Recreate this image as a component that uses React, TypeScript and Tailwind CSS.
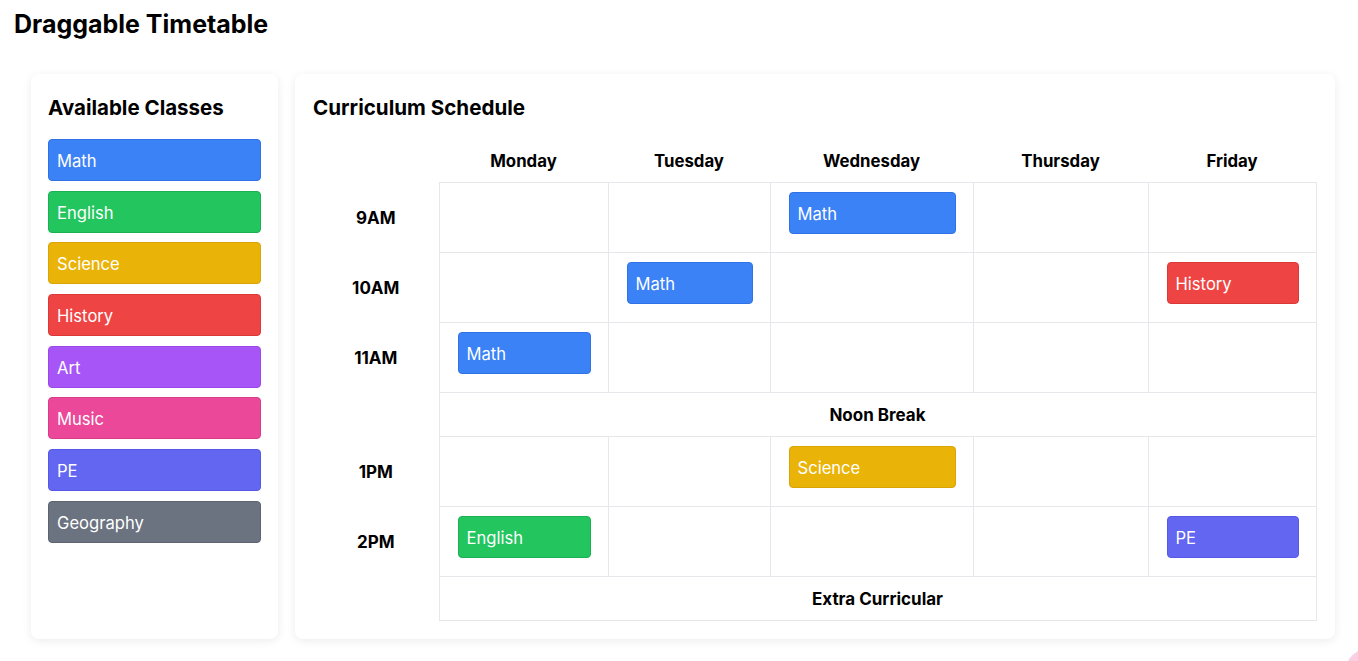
import React from 'react';

type Subject = { name: string; bg: string };

const classes: Subject[] = [
    { name: 'Math', bg: 'bg-[#3b82f6] border-[#2f72e6]' },
    { name: 'English', bg: 'bg-[#22c55e] border-[#1bb152]' },
    { name: 'Science', bg: 'bg-[#eab308] border-[#d9a506]' },
    { name: 'History', bg: 'bg-[#ef4444] border-[#dc3838]' },
    { name: 'Art', bg: 'bg-[#a855f7] border-[#9a48ea]' },
    { name: 'Music', bg: 'bg-[#ec4899] border-[#da3c8b]' },
    { name: 'PE', bg: 'bg-[#6366f1] border-[#5558e6]' },
    { name: 'Geography', bg: 'bg-[#6b7280] border-[#5d6470]' },
];

const colorOf = (name: string) => classes.find(c => c.name === name)?.bg ?? '';

const days = [
    { name: 'Monday', w: 'w-[169px]' },
    { name: 'Tuesday', w: 'w-[162px]' },
    { name: 'Wednesday', w: 'w-[203px]' },
    { name: 'Thursday', w: 'w-[175px]' },
    { name: 'Friday', w: 'w-[168px]' },
];

type Row = { time: string; cells: (string | null)[] } | { label: string };

const rows: Row[] = [
    { time: '9AM', cells: [null, null, 'Math', null, null] },
    { time: '10AM', cells: [null, 'Math', null, null, 'History'] },
    { time: '11AM', cells: ['Math', null, null, null, null] },
    { label: 'Noon Break' },
    { time: '1PM', cells: [null, null, 'Science', null, null] },
    { time: '2PM', cells: ['English', null, null, null, 'PE'] },
    { label: 'Extra Curricular' },
];

function Chip({ name }: { name: string }) {
    return (
        <div className={`h-[42px] flex items-center px-2 pt-[3px] rounded-[4px] border text-white text-[16.6px] ${colorOf(name)}`}>
            {name}
        </div>
    );
}

export default function App() {
    return (
        <div className="relative min-h-[661px] bg-white text-black overflow-hidden font-['Inter','Liberation_Sans',sans-serif]">
            <h1 className="pl-[14px] pt-[8px] text-[25px] leading-[32px] font-bold">Draggable Timetable</h1>

            <div className="flex gap-[17px] pl-[31px] pr-[24px] mt-[34px]">
                {/* Available classes */}
                <div className="w-[247px] shrink-0 bg-white rounded-lg shadow-[0_2px_10px_rgba(0,0,0,0.08)] p-[17px] pt-[20px]">
                    <h2 className="text-[20.5px] leading-[28px] font-bold mb-[17px]">Available Classes</h2>
                    <div className="flex flex-col gap-[9.7px]">
                        {classes.map(c => (
                            <Chip key={c.name} name={c.name} />
                        ))}
                    </div>
                </div>

                {/* Schedule */}
                <div className="flex-1 bg-white rounded-lg shadow-[0_2px_10px_rgba(0,0,0,0.08)] p-[18px] pt-[20px]">
                    <h2 className="text-[20.6px] leading-[28px] font-bold mb-[18px]">Curriculum Schedule</h2>
                    <table className="border-collapse table-fixed w-[1003px]">
                        <thead>
                            <tr className="h-[42px]">
                                <th className="w-[126px]"></th>
                                {days.map(d => (
                                    <th key={d.name} className={`${d.w} text-[16.8px] font-bold text-center pt-[2px]`}>{d.name}</th>
                                ))}
                            </tr>
                        </thead>
                        <tbody>
                            {rows.map((r, i) =>
                                'label' in r ? (
                                    <tr key={i} className="h-[44px]">
                                        <td></td>
                                        <td colSpan={5} className="border border-[#e5e7eb] text-center text-[17px] font-bold pt-[3px]">{r.label}</td>
                                    </tr>
                                ) : (
                                    <tr key={i} className="h-[70px]">
                                        <td className="text-center text-[17px] font-bold pt-[4px]">{r.time}</td>
                                        {r.cells.map((c, j) => (
                                            <td key={j} className="border border-[#e5e7eb] align-top pt-[9px] pb-[17px] pl-[18px] pr-[17px]">
                                                {c && <Chip name={c} />}
                                            </td>
                                        ))}
                                    </tr>
                                )
                            )}
                        </tbody>
                    </table>
                </div>
            </div>

            <div className="absolute right-[-49px] bottom-[-49px] w-[64px] h-[64px] rounded-full bg-[#fbcfe3]"></div>
        </div>
    );
}
